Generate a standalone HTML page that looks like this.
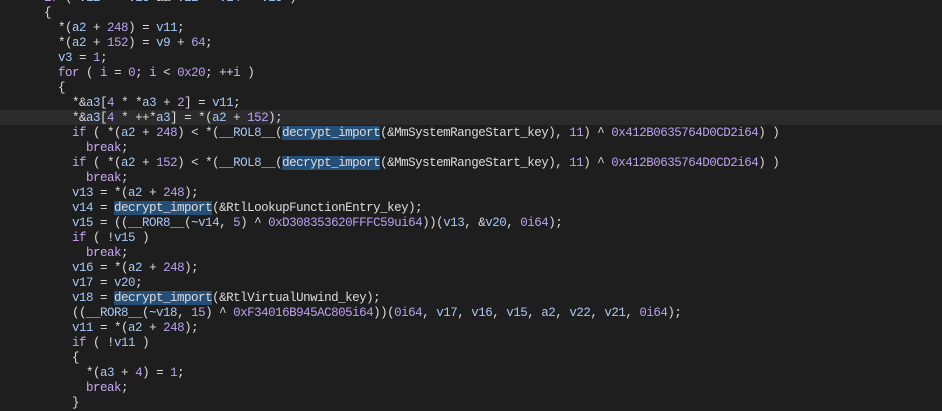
<!DOCTYPE html>
<html><head><meta charset="utf-8"><style>
html,body{margin:0;padding:0;background:#1e1e1e;width:942px;height:403px;overflow:hidden}
pre{position:absolute;left:2px;top:-9px;margin:0;font-family:"Liberation Mono",monospace;font-size:12.5px;letter-spacing:-0.5px;line-height:15px;color:#dcdcdc}
.cur{position:absolute;left:0;top:110px;width:942px;height:15px;background:#2b2b2b}
.k{color:#c9a6ef}.n{color:#b9a0f0}.v{color:#a6c8f5}.h{background:#264f78;color:#dcdcdc}.f{color:#a6c8f5}
</style></head><body>
<div class="cur"></div>
<pre>      <span class="k">if</span> ( <span class="v">v12</span> &gt;= <span class="v">v13</span> &amp;&amp; <span class="v">v12</span> &lt; <span class="v">v14</span> + <span class="v">v15</span> )
      {
        *(<span class="v">a2</span> + <span class="n">248</span>) = <span class="v">v11</span>;
        *(<span class="v">a2</span> + <span class="n">152</span>) = <span class="v">v9</span> + <span class="n">64</span>;
        <span class="v">v3</span> = <span class="n">1</span>;
        <span class="k">for</span> ( <span class="v">i</span> = <span class="n">0</span>; <span class="v">i</span> &lt; <span class="n">0x20</span>; ++<span class="v">i</span> )
        {
          *&amp;<span class="v">a3</span>[<span class="n">4</span> * *<span class="v">a3</span> + <span class="n">2</span>] = <span class="v">v11</span>;
          *&amp;<span class="v">a3</span>[<span class="n">4</span> * ++*<span class="v">a3</span>] = *(<span class="v">a2</span> + <span class="n">152</span>);
          <span class="k">if</span> ( *(<span class="v">a2</span> + <span class="n">248</span>) &lt; *(<span class="f">__ROL8__</span>(<span class="h">decrypt_import</span>(&amp;MmSystemRangeStart_key), <span class="n">11</span>) ^ <span class="n">0x412B0635764D0CD2i64</span>) )
            <span class="k">break</span>;
          <span class="k">if</span> ( *(<span class="v">a2</span> + <span class="n">152</span>) &lt; *(<span class="f">__ROL8__</span>(<span class="h">decrypt_import</span>(&amp;MmSystemRangeStart_key), <span class="n">11</span>) ^ <span class="n">0x412B0635764D0CD2i64</span>) )
            <span class="k">break</span>;
          <span class="v">v13</span> = *(<span class="v">a2</span> + <span class="n">248</span>);
          <span class="v">v14</span> = <span class="h">decrypt_import</span>(&amp;RtlLookupFunctionEntry_key);
          <span class="v">v15</span> = ((<span class="f">__ROR8__</span>(~<span class="v">v14</span>, <span class="n">5</span>) ^ <span class="n">0xD308353620FFFC59ui64</span>))(<span class="v">v13</span>, &amp;<span class="v">v20</span>, <span class="n">0i64</span>);
          <span class="k">if</span> ( !<span class="v">v15</span> )
            <span class="k">break</span>;
          <span class="v">v16</span> = *(<span class="v">a2</span> + <span class="n">248</span>);
          <span class="v">v17</span> = <span class="v">v20</span>;
          <span class="v">v18</span> = <span class="h">decrypt_import</span>(&amp;RtlVirtualUnwind_key);
          ((<span class="f">__ROR8__</span>(~<span class="v">v18</span>, <span class="n">15</span>) ^ <span class="n">0xF34016B945AC805i64</span>))(<span class="n">0i64</span>, <span class="v">v17</span>, <span class="v">v16</span>, <span class="v">v15</span>, <span class="v">a2</span>, <span class="v">v22</span>, <span class="v">v21</span>, <span class="n">0i64</span>);
          <span class="v">v11</span> = *(<span class="v">a2</span> + <span class="n">248</span>);
          <span class="k">if</span> ( !<span class="v">v11</span> )
          {
            *(<span class="v">a3</span> + <span class="n">4</span>) = <span class="n">1</span>;
            <span class="k">break</span>;
          }
</pre>
</body></html>
